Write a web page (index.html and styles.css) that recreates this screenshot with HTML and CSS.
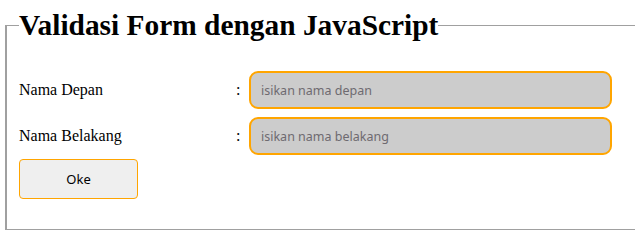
FILE: index.html
```html
<!DOCTYPE html>
<html lang="id">
<head>
  <meta charset="UTF-8">
  <meta name="viewport" content="width=device-width, initial-scale=1.0">
  <title>Validasi Form dengan JavaScript</title>
  <link rel="stylesheet" href="styles.css">
</head>
<body>
  <form class="form-box" onsubmit="return false;">
    <fieldset>
      <legend>Validasi Form dengan JavaScript</legend>
      <div class="form-row">
        <label for="depan">Nama Depan</label>
        <span class="colon">:</span>
        <input type="text" id="depan" placeholder="isikan nama depan">
      </div>
      <div class="form-row">
        <label for="belakang">Nama Belakang</label>
        <span class="colon">:</span>
        <input type="text" id="belakang" placeholder="isikan nama belakang">
      </div>
      <button type="submit">Oke</button>
    </fieldset>
  </form>
</body>
</html>
```

FILE: styles.css
```css
html, body {
  overflow: hidden;
}
body {
  margin: 9px 0 0 5px;
  font-family: "Liberation Serif", "Times New Roman", serif;
  font-size: 16px;
  background: #fff;
}
fieldset {
  margin: 0;
  width: 660px;
  padding: 29px 12px 30px 12px;
  border: 1px solid #a0a0a0;
  border-left-width: 2px;
}
legend {
  padding: 0;
  font-size: 29.4px;
  font-weight: bold;
}
.form-row {
  display: grid;
  grid-template-columns: 217px 13px 363px;
  align-items: center;
  margin-bottom: 8px;
}
.form-row input {
  height: 38px;
  box-sizing: border-box;
  padding: 0 10px;
  border: 2px solid orange;
  border-radius: 9px;
  background-color: #cccccc;
  font-family: "Noto Sans", sans-serif;
  font-size: 12.5px;
  outline: none;
}
.form-row input::placeholder {
  color: #6e6a70;
}
button {
  display: block;
  width: 119px;
  height: 40px;
  margin-top: -4px;
  border: 1px solid orange;
  border-radius: 4px;
  background-color: #efefef;
  font-family: "Noto Sans", sans-serif;
  font-size: 13px;
  color: #000;
}
```
